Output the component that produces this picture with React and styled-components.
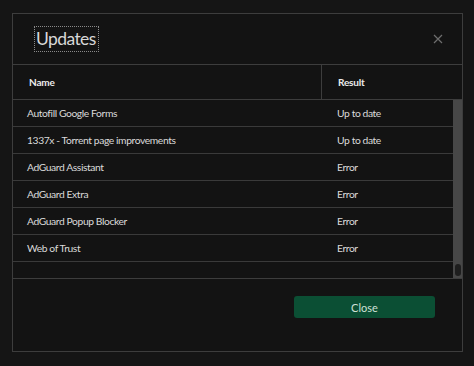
import React from "react";
import styled, { createGlobalStyle } from "styled-components";

const Global = createGlobalStyle`
  html, body { margin: 0; padding: 0; background: #151515; }
  body { font-family: Lato, "Open Sans", sans-serif; }
`;

const Page = styled.div`
  width: 474px;
  height: 366px;
  padding: 13px 11px 14px 12px;
  box-sizing: border-box;
`;

const Dialog = styled.div`
  width: 451px;
  height: 339px;
  box-sizing: border-box;
  border: 1px solid #3d3d3d;
  background: #131313;
  display: flex;
  flex-direction: column;
`;

const Header = styled.div`
  height: 51px;
  display: flex;
  align-items: center;
  justify-content: space-between;
  padding: 0 18px 0 22px;
  border-bottom: 1px solid #3d3d3d;
  box-sizing: border-box;
`;

const Title = styled.h1`
  margin: 0;
  font-family: Lato, sans-serif;
  font-size: 17.5px;
  font-weight: 400;
  letter-spacing: -0.6px;
  color: #d8d8d8;
  padding: 0 2px 0 1px;
  line-height: 24px;
  outline: 1px dotted #8a8a8a;
`;

const CloseX = styled.button`
  background: none;
  border: none;
  padding: 0;
  width: 12px;
  height: 12px;
  display: flex;
  color: #6e6e6e;
`;

const HeadRow = styled.div`
  display: grid;
  grid-template-columns: 309px 1fr;
  height: 35px;
  border-bottom: 1px solid #3d3d3d;
  box-sizing: border-box;
`;

const HeadCell = styled.div`
  display: flex;
  align-items: center;
  padding-left: ${(p) => p.$pad}px;
  font-size: 10px;
  font-weight: 700;
  letter-spacing: -0.2px;
  color: #ececec;
  border-right: ${(p) => (p.$divider ? "1px solid #3d3d3d" : "none")};
`;

const BodyWrap = styled.div`
  display: flex;
  height: 178px;
  border-bottom: 1px solid #3d3d3d;
  box-sizing: content-box;
`;

const Rows = styled.div`
  flex: 1;
  display: flex;
  flex-direction: column;
`;

const Row = styled.div`
  display: grid;
  grid-template-columns: 310px 1fr;
  height: 27px;
  border-bottom: 1px solid #3a3a3a;
  box-sizing: border-box;
  align-items: center;
  font-size: 10.3px;
  letter-spacing: -0.4px;
  color: #dadada;
`;

const Cell = styled.div`
  padding-left: ${(p) => p.$pad}px;
  white-space: nowrap;
`;

const Scrollbar = styled.div`
  width: 9px;
  background: #474747;
  display: flex;
  flex-direction: column;
  justify-content: flex-end;
  align-items: center;
  padding-bottom: 2px;
  box-sizing: border-box;
`;

const Thumb = styled.div`
  width: 6px;
  height: 12px;
  border-radius: 3px;
  background: #1e1e1e;
`;

const Footer = styled.div`
  flex: 1;
  display: flex;
  justify-content: flex-end;
  padding: 17px 27px 0 0;
`;

const Button = styled.button`
  width: 141px;
  height: 22px;
  border: none;
  border-radius: 3px;
  background: #0b4f34;
  color: #cfe0d6;
  font-family: Lato, sans-serif;
  font-size: 11px;
`;

const items = [
  ["Autofill Google Forms", "Up to date"],
  ["1337x - Torrent page improvements", "Up to date"],
  ["AdGuard Assistant", "Error"],
  ["AdGuard Extra", "Error"],
  ["AdGuard Popup Blocker", "Error"],
  ["Web of Trust", "Error"],
];

export default function App() {
  return (
    <>
      <Global />
      <Page>
        <Dialog>
          <Header>
            <Title>Updates</Title>
            <CloseX aria-label="Close">
              <svg width="12" height="12" viewBox="0 0 12 12">
                <path d="M2 2 L10 10 M10 2 L2 10" stroke="currentColor" strokeWidth="1.2" />
              </svg>
            </CloseX>
          </Header>
          <HeadRow>
            <HeadCell $pad={16} $divider>Name</HeadCell>
            <HeadCell $pad={16}>Result</HeadCell>
          </HeadRow>
          <BodyWrap>
            <Rows>
              {items.map(([n, r]) => (
                <Row key={n}>
                  <Cell $pad={14}>{n}</Cell>
                  <Cell $pad={14}>{r}</Cell>
                </Row>
              ))}
            </Rows>
            <Scrollbar>
              <Thumb />
            </Scrollbar>
          </BodyWrap>
          <Footer>
            <Button>Close</Button>
          </Footer>
        </Dialog>
      </Page>
    </>
  );
}
